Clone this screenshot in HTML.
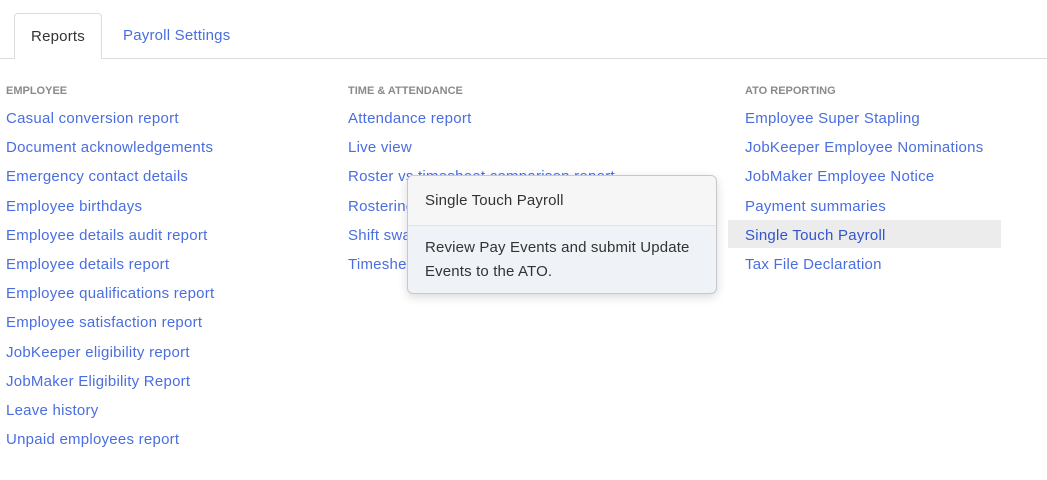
<!DOCTYPE html>
<html><head><style>
body{margin:0;width:1047px;height:480px;background:#fff;font-family:"Liberation Sans",sans-serif;position:relative;overflow:hidden}
.line{position:absolute;left:0;top:58px;width:1047px;height:1px;background:#dcdcdc}
.tab{position:absolute;top:13px;left:14px;width:88px;border:1px solid #dcdcdc;border-bottom:none;border-radius:4px 4px 0 0;background:#fff;z-index:2;box-sizing:border-box;height:46px;text-align:center;line-height:46px;font-size:15px;color:#333;letter-spacing:.2px}
.tab2{position:absolute;top:13px;left:123px;line-height:46px;font-size:15px;color:#4a6ee0;letter-spacing:.2px}
.col{position:absolute;top:83px}
.h{font-size:11px;font-weight:bold;color:#8a8a8a;height:21px;line-height:16px}
.l{font-size:15px;line-height:29.2px;height:29.2px;color:#4a6ee0;white-space:nowrap;letter-spacing:.25px}
.hl{position:absolute;left:728px;top:220px;width:273px;height:28px;background:#ececec}
.pop{position:absolute;left:407px;top:175px;width:308px;height:117px;border:1px solid #c8c8cc;border-radius:6px;background:#eff2f7;box-shadow:0 3px 10px rgba(0,0,0,.15);overflow:hidden;font-size:15px;color:#333;z-index:5;letter-spacing:.15px}
.pt{background:#f6f6f6;height:49px;border-bottom:1px solid #e2e2e6;padding-left:17px;line-height:50px}
.pb{padding:10px 17px 0;line-height:24px}
</style></head><body>
<div class="line"></div>
<div class="tab">Reports</div>
<div class="tab2">Payroll Settings</div>
<div class="hl"></div>
<div class="col" style="left:6px">
<div class="h">EMPLOYEE</div>
<div class="l">Casual conversion report</div>
<div class="l">Document acknowledgements</div>
<div class="l">Emergency contact details</div>
<div class="l">Employee birthdays</div>
<div class="l">Employee details audit report</div>
<div class="l">Employee details report</div>
<div class="l">Employee qualifications report</div>
<div class="l">Employee satisfaction report</div>
<div class="l">JobKeeper eligibility report</div>
<div class="l">JobMaker Eligibility Report</div>
<div class="l">Leave history</div>
<div class="l">Unpaid employees report</div>
</div>
<div class="col" style="left:348px">
<div class="h">TIME &amp; ATTENDANCE</div>
<div class="l">Attendance report</div>
<div class="l">Live view</div>
<div class="l">Roster vs timesheet comparison report</div>
<div class="l">Rostering report</div>
<div class="l">Shift swaps report</div>
<div class="l">Timesheet report</div>
</div>
<div class="col" style="left:745px">
<div class="h">ATO REPORTING</div>
<div class="l">Employee Super Stapling</div>
<div class="l">JobKeeper Employee Nominations</div>
<div class="l">JobMaker Employee Notice</div>
<div class="l">Payment summaries</div>
<div class="l" style="color:#3355cc">Single Touch Payroll</div>
<div class="l">Tax File Declaration</div>
</div>
<div class="pop">
<div class="pt">Single Touch Payroll</div>
<div class="pb">Review Pay Events and submit Update Events to the ATO.</div>
</div>
</body></html>
